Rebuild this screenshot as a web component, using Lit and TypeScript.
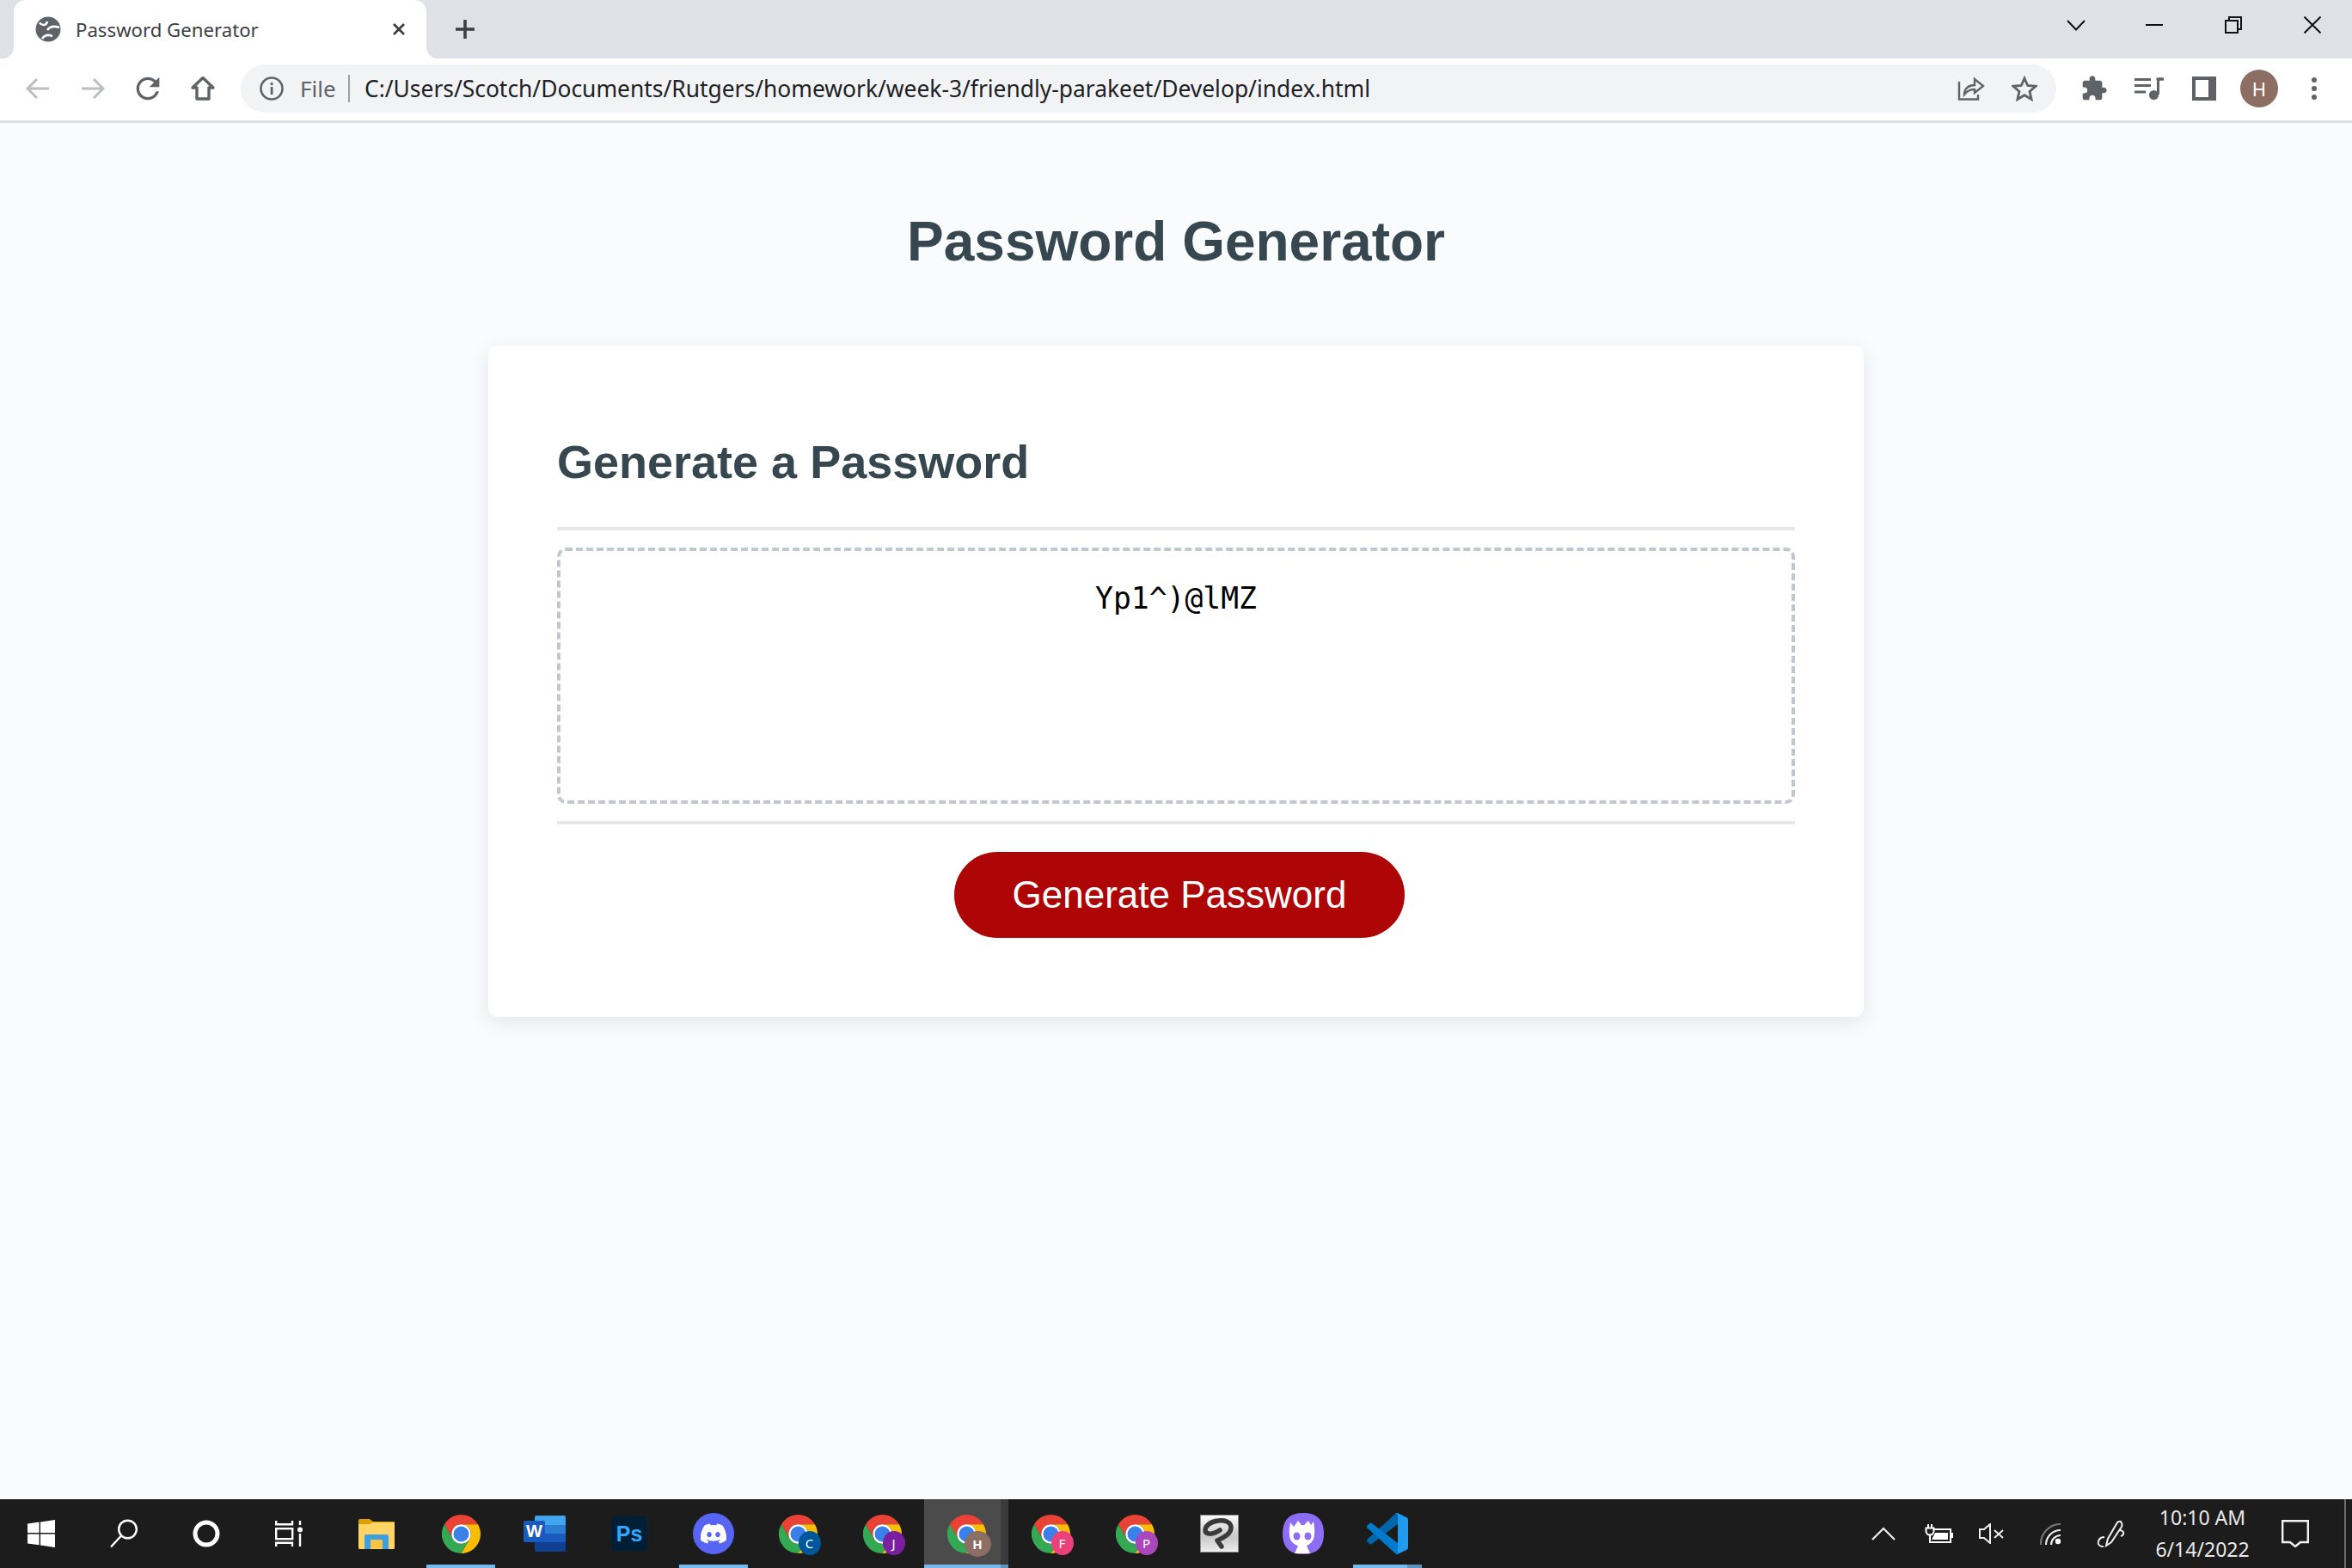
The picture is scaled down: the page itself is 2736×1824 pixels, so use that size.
import { LitElement, html, css } from "lit";
import { customElement } from "lit/decorators.js";

const chrome = (size = 44) => html`<svg class="block" width=${size} height=${size} viewBox="0 0 48 48">
  <path fill="#ea4335" d="M24 0C15.1 0 7.4 4.8 3.2 12l10.4 18A12 12 0 0 1 24 12h20.8C40.6 4.8 32.9 0 24 0z"/>
  <path fill="#fbbc04" d="M44.8 12H24a12 12 0 0 1 10.4 18L24 48c13.3 0 24-10.7 24-24 0-4.4-1.2-8.5-3.2-12z"/>
  <path fill="#34a853" d="M3.2 12A24 24 0 0 0 24 48l10.4-18A12 12 0 0 1 13.6 30z"/>
  <circle cx="24" cy="24" r="12" fill="#fff"/><circle cx="24" cy="24" r="9.6" fill="#3b7fe8"/></svg>`;

const profileChrome = (letter: string, cls: string) => html`<div class="pchrome">${chrome(45)}<span class="badge ${cls}">${letter}</span></div>`;

const taskIcons = {
  win: html`<svg class="block" width="32" height="32" viewBox="0 0 32 32"><path fill="#fff" d="M0 4.6 13.6 2.6V15H0zM15 2.4 32 0V15H15zM0 16.6H13.6V29.3L0 27.4zM15 16.6H32V32L15 29.6z"/></svg>`,
  search: html`<svg class="block" width="34" height="34" viewBox="0 0 34 34" fill="none" stroke="#fff" stroke-width="2.4"><circle cx="21.5" cy="12" r="10.3"/><path d="M14 19.5 2 32.5"/></svg>`,
  cortana: html`<svg class="block" width="32" height="32" viewBox="0 0 32 32"><circle cx="16" cy="16" r="13" fill="none" stroke="#fff" stroke-width="5"/></svg>`,
  view: html`<svg class="block" width="33" height="30" viewBox="0 0 33 30" fill="none" stroke="#fff" stroke-width="2.4"><path d="M1.2 0V4.2H20V0M1.2 30V25.8H20V30"/><rect x="1.2" y="9.2" width="19" height="12"/><path d="M29 0V5M29 15V30"/><circle cx="29" cy="10.5" r="3" fill="#fff" stroke="none"/></svg>`,
  folder: html`<svg class="block" width="42" height="35" viewBox="0 0 42 35"><path fill="#dd9f00" d="M1.5 0H13l4 3H42V10H0V1.500A1.500 1.500 0 0 1 1.500 0z"/><path fill="#ffd665" d="M0 6H13l3-2H40.500A1.500 1.500 0 0 1 42 5.500V33.500A1.500 1.500 0 0 1 40.500 35H1.500A1.500 1.500 0 0 1 0 33.500z"/><path fill="#3d9fdf" d="M9 18H33A2 2 0 0 1 35 20V35H28V24H14V35H7V20A2 2 0 0 1 9 18z"/><rect x="14" y="24" width="14" height="10" fill="#f5c242"/></svg>`,
  word: html`<svg class="block" width="47" height="42" viewBox="0 0 47 42"><path fill="#41a5ee" d="M13 0H45A2 2 0 0 1 47 2V11H11V2A2 2 0 0 1 13 0z"/><rect x="11" y="11" width="36" height="10" fill="#2b7cd3"/><rect x="11" y="21" width="36" height="10" fill="#185abd"/><path fill="#103f91" d="M11 31H47V40A2 2 0 0 1 45 42H13A2 2 0 0 1 11 40z"/></svg><span class="wbox">W</span>`,
  discord: html`<div class="discord"><svg class="block" width="30" height="30" viewBox="0 0 24 24"><path fill="#fff" d="M20.317 4.37a19.791 19.791 0 0 0-4.885-1.515.074.074 0 0 0-.079.037c-.21.375-.444.864-.608 1.25a18.27 18.27 0 0 0-5.487 0 12.64 12.64 0 0 0-.617-1.25.077.077 0 0 0-.079-.037A19.736 19.736 0 0 0 3.677 4.37a.07.07 0 0 0-.032.027C.533 9.046-.32 13.58.099 18.057a.082.082 0 0 0 .031.057 19.9 19.9 0 0 0 5.993 3.03.078.078 0 0 0 .084-.028 14.09 14.09 0 0 0 1.226-1.994.076.076 0 0 0-.041-.106 13.107 13.107 0 0 1-1.872-.892.077.077 0 0 1-.008-.128 10.2 10.2 0 0 0 .372-.292.074.074 0 0 1 .077-.01c3.928 1.793 8.18 1.793 12.062 0a.074.074 0 0 1 .078.01c.12.098.246.198.373.292a.077.077 0 0 1-.006.127 12.299 12.299 0 0 1-1.873.892.077.077 0 0 0-.041.107c.36.698.772 1.362 1.225 1.993a.076.076 0 0 0 .084.028 19.839 19.839 0 0 0 6.002-3.03.077.077 0 0 0 .032-.054c.5-5.177-.838-9.674-3.549-13.66a.061.061 0 0 0-.031-.03zM8.02 15.33c-1.183 0-2.157-1.085-2.157-2.419 0-1.333.956-2.419 2.157-2.419 1.21 0 2.176 1.096 2.157 2.42 0 1.333-.956 2.418-2.157 2.418zm7.975 0c-1.183 0-2.157-1.085-2.157-2.419 0-1.333.955-2.419 2.157-2.419 1.21 0 2.176 1.096 2.157 2.42 0 1.333-.946 2.418-2.157 2.418z"/></svg></div>`,
  clip: html`<div class="clip"><svg class="block" width="42" height="42" viewBox="0 0 42 42" fill="none" stroke="#3a3a3a" stroke-width="5.5" stroke-linecap="round" stroke-linejoin="round"><path d="M24 36 19 29C25 26 35 22 35 14 35 7 27 5 20 6 11 7 5 12 5 17 5 22 13 23 22 17"/></svg></div>`,
  cat: html`<svg class="block" width="48" height="48" viewBox="0 0 48 48"><path fill="#8d6cf6" d="M24 0C40 0 48 8 48 24S40 48 24 48 0 40 0 24 8 0 24 0z"/><path fill="#fff" d="M9 11 13 16 18 9 22 14 25 14 30 9 33 14 36 10C37 16 38 24 36 30 34 35 30 37 28 38L32 47H14L18 38C14 37 10 34 8.500 29 7 23 8 16 9 11z"/><ellipse cx="16.500" cy="27" rx="4" ry="4.500" fill="#8d6cf6"/><ellipse cx="29.500" cy="27" rx="4" ry="4.500" fill="#8d6cf6"/></svg>`,
  code: html`<svg class="block" width="48" height="48" viewBox="0 0 100 100"><path fill="#0065a9" d="M96.46 10.8 75.86.87a6.23 6.23 0 0 0-7.1 1.2L1.3 63.6a4.16 4.16 0 0 0 0 6.16l5.5 5a4.16 4.16 0 0 0 5.32.24L93.34 12.9a4.13 4.13 0 0 1 6.66 3.3v-.24a6.25 6.25 0 0 0-3.54-5.16z"/><path fill="#007acc" d="M96.46 89.2 75.86 99.13a6.23 6.23 0 0 1-7.1-1.2L1.3 36.4a4.16 4.16 0 0 1 0-6.16l5.5-5a4.16 4.16 0 0 1 5.32-.24l81.22 62.1a4.13 4.13 0 0 0 6.66-3.3v.24a6.25 6.25 0 0 1-3.54 5.16z"/><path fill="#1f9cf0" d="M75.86 99.13a6.23 6.23 0 0 1-7.1-1.2c2.3 2.3 6.24.67 6.24-2.6V4.67c0-3.27-3.94-4.9-6.24-2.6a6.23 6.23 0 0 1 7.1-1.2l20.6 9.9A6.25 6.25 0 0 1 100 16.4v67.2a6.25 6.25 0 0 1-3.54 5.63z"/></svg>`,
};

const leftItems = [
  { i: taskIcons.win, c: "n" },
  { i: taskIcons.search, c: "n" },
  { i: taskIcons.cortana, c: "n" },
  { i: taskIcons.view, c: "n last" },
];
const apps = [
  { i: taskIcons.folder, c: "" },
  { i: chrome(45), c: "run" },
  { i: taskIcons.word, c: "wordc" },
  { i: html`<div class="ps">Ps</div>`, c: "" },
  { i: taskIcons.discord, c: "run" },
  { i: profileChrome("C", "b-c"), c: "" },
  { i: profileChrome("J", "b-j"), c: "" },
  { i: profileChrome("H", "b-h"), c: "active" },
  { i: profileChrome("F", "b-f"), c: "" },
  { i: profileChrome("P", "b-p"), c: "" },
  { i: taskIcons.clip, c: "" },
  { i: taskIcons.cat, c: "" },
  { i: taskIcons.code, c: "run split" },
];

@customElement("app-root")
export class AppRoot extends LitElement {
  static styles = css`
    :host { display: flex; flex-direction: column; width: 2736px; height: 1824px; overflow: hidden; background: #fafbfd; }
    * { box-sizing: border-box; }
    .block { display: block; }
    .tabstrip { height: 68px; background: #dee1e6; display: flex; align-items: stretch; flex: none; }
    .tab { position: relative; width: 480px; margin-left: 16px; background: #fff; border-radius: 14px 14px 0 0; display: flex; align-items: center; padding-left: 25px; }
    .tab::before, .tab::after { content: ""; position: absolute; bottom: 0; width: 14px; height: 14px; background: #fff; }
    .tab::before { left: -14px; -webkit-mask: radial-gradient(circle at 0 0, transparent 14px, #000 14.5px); mask: radial-gradient(circle at 0 0, transparent 14px, #000 14.5px); }
    .tab::after { right: -14px; -webkit-mask: radial-gradient(circle at 100% 0, transparent 14px, #000 14.5px); mask: radial-gradient(circle at 100% 0, transparent 14px, #000 14.5px); }
    .tab-title { font: 400 22.2px "Noto Sans", sans-serif; color: #3c4043; margin-left: 17px; flex: 1; white-space: nowrap; }
    .tab-x { margin-right: 24px; }
    .plus { margin-left: 33px; align-self: center; }
    .win { margin-left: auto; display: flex; }
    .win-btn { width: 92px; display: flex; align-items: center; justify-content: center; height: 58px; }
    .win-btn.chev { padding-left: 2px; }
    .toolbar { height: 75px; flex: none; background: #fff; border-bottom: 3px solid #dcdee1; display: flex; align-items: center; padding: 0 12px 3px; }
    .tbtn { width: 64px; height: 64px; display: flex; align-items: center; justify-content: center; flex: none; }
    .omni { width: 2112px; height: 56px; margin: 0 12px; border-radius: 28px; background: #f1f3f4; display: flex; align-items: center; flex: none; padding-left: 22px; }
    .file { font: 400 26px "Noto Sans", sans-serif; color: #5f6368; margin-left: 19px; width: 56px; padding-top: 1px; }
    .sep { width: 2px; height: 32px; background: #9aa0a6; }
    .url { font: 400 26.4px "Noto Sans", sans-serif; color: #202124; margin-left: 17px; flex: 1; white-space: nowrap; padding-top: 1px; }
    .omni-end { display: flex; margin-right: 6px; padding-top: 1px; }
    .omni-btn { width: 62px; display: flex; justify-content: center; align-items: center; }
    .avatar { width: 44px; height: 44px; border-radius: 50%; background: #8d6e63; color: #fff; font: 400 22px "Noto Sans", sans-serif; display: flex; align-items: center; justify-content: center; }

    main { flex: 1; display: flex; flex-direction: column; align-items: center; font-family: "Liberation Sans", Arial, sans-serif; }
    h1 { margin: 101px 0 84px; font-size: 64px; line-height: 74px; font-weight: 700; color: #37474f; }
    .card { width: 1600px; height: 781px; background: #fff; border-radius: 10px; box-shadow: 0 6px 24px rgba(0, 0, 0, 0.09); padding: 80px; display: flex; flex-direction: column; }
    h2 { margin: 24px 0 45px; font-size: 54px; line-height: 62px; font-weight: 700; color: #37474f; }
    .body { border-top: 4px solid #e7e8ea; border-bottom: 4px solid #e7e8ea; padding: 20px 0; }
    textarea { display: block; width: 100%; height: 298px; border: 4px dashed #c0c7d0; border-radius: 10px; resize: none; outline: none; padding: 35px 20px 20px; text-align: center; font: 400 34.7px/40px "DejaVu Sans Mono", monospace; color: #000; background: #fff; }
    .actions { display: flex; justify-content: center; margin: 32px 0 0 8px; }
    button { width: 524px; height: 100px; border: 0; border-radius: 50px; background: #ae0606; color: #fff; font: 400 44px "Liberation Sans", Arial, sans-serif; }

    .taskbar { height: 80px; flex: none; background: #1c1c1c; display: flex; align-items: stretch; }
    .slot { position: relative; display: flex; align-items: center; justify-content: center; width: 98px; }
    .slot.n { width: 96px; }
    .slot.last { margin-right: 5px; }
    .slot.run::after, .slot.active::after { content: ""; position: absolute; bottom: 0; left: 9px; right: 9px; height: 4px; background: #76b9ed; }
    .slot.active { background: linear-gradient(90deg, #4b4b4b 0 89px, #3a3a3a 89px); }
    .slot.active::after { left: 0; right: 0; background: linear-gradient(90deg, #76b9ed 0 89px, #5e93bd 89px); }
    .slot.split::after { background: linear-gradient(90deg, #76b9ed 0 63px, #5e93bd 63px); }
    .wbox { position: absolute; left: 24px; top: 25px; width: 25px; height: 25px; background: #185abd; border-radius: 2px; color: #fff; font: 700 20px/25px "Liberation Sans", sans-serif; text-align: center; }
    .ps { width: 42px; height: 40px; background: #001e36; border-radius: 5px; color: #31a8ff; font: 700 25px/40px "Liberation Sans", sans-serif; text-align: center; }
    .discord { width: 48px; height: 48px; border-radius: 50%; background: #5865f2; display: flex; align-items: center; justify-content: center; }
    .clip { width: 45px; height: 44px; border: 1px solid #8a8a8a; background: linear-gradient(180deg, #fafafa, #c9c9c9 60%, #eee); }
    .pchrome { position: relative; width: 45px; height: 45px; }
    .badge { position: absolute; left: 23px; top: 19px; width: 26px; height: 28px; border-radius: 50%; color: #fff; font: 400 15px/28px "Noto Sans", sans-serif; text-align: center; }
    .b-c { background: #01579b; }
    .b-j { background: #7b1fa2; }
    .b-h { background: #8d6e63; width: 31px; height: 30px; line-height: 30px; font-weight: 700; left: 20px; }
    .b-f { background: #ec407a; }
    .b-p { background: #ab47bc; }
    .tray { margin-left: auto; display: grid; grid-template-columns: 64px 64px 60px 76px 64px 150px 66px 24px 2px 7px; align-items: center; }
    .tray > div { display: flex; justify-content: center; align-items: center; }
    .clock { flex-direction: column; font: 400 23px/37px "Noto Sans", sans-serif; color: #e8e8e8; text-align: center; }
    .endline { background: #6b6b6b; height: 80px; }
  `;

  render() {
    const grey = "#5f6368";
    return html`
      <div class="tabstrip">
        <div class="tab">
          <svg class="block" width="30" height="30" viewBox="0 0 30 30"><circle cx="15" cy="15" r="14.500" fill=${grey}/><path d="M5 7.500C8 11 13 11 14 6M14 16C17 11.500 22 11 28 13M8 26C11 21.500 15 21 20 23" fill="none" stroke="#fff" stroke-width="2.600"/></svg>
          <span class="tab-title">Password Generator</span>
          <svg class="tab-x block" width="16" height="16" viewBox="0 0 16 16"><path d="M2 2 14 14M14 2 2 14" stroke="#3c4043" stroke-width="2.800"/></svg>
        </div>
        <svg class="plus block" width="24" height="24" viewBox="0 0 24 24"><path d="M12 1V23M1 12H23" stroke="#3c4043" stroke-width="3.600"/></svg>
        <div class="win">
          <div class="win-btn chev"><svg class="block" width="22" height="13" viewBox="0 0 22 13"><path d="M1 1 11 11.500 21 1" fill="none" stroke="#111" stroke-width="2"/></svg></div>
          <div class="win-btn"><svg class="block" width="20" height="2" viewBox="0 0 20 2"><rect width="20" height="2" fill="#111"/></svg></div>
          <div class="win-btn"><svg class="block" width="20" height="20" viewBox="0 0 20 20" fill="none" stroke="#111" stroke-width="2"><rect x="1" y="5" width="14" height="14"/><path d="M5 5V1H19V15H15"/></svg></div>
          <div class="win-btn"><svg class="block" width="20" height="20" viewBox="0 0 20 20"><path d="M0.500 0.500 19.500 19.500M19.500 0.500 0.500 19.500" stroke="#111" stroke-width="2"/></svg></div>
        </div>
      </div>
      <div class="toolbar">
        <div class="tbtn"><svg class="block" width="28" height="26" viewBox="0 0 28 26" fill="none" stroke="#bbbdbf" stroke-width="3"><path d="M27 13H3M13 2 2 13 13 24"/></svg></div>
        <div class="tbtn"><svg class="block" width="28" height="26" viewBox="0 0 28 26" fill="none" stroke="#bbbdbf" stroke-width="3"><path d="M1 13H25M15 2 26 13 15 24"/></svg></div>
        <div class="tbtn"><svg class="block" width="40" height="40" viewBox="0 0 24 24"><path fill=${grey} d="M17.650 6.350A7.958 7.958 0 0 0 12 4c-4.420 0-7.990 3.580-7.990 8s3.570 8 7.990 8c3.730 0 6.840-2.550 7.730-6h-2.080A5.990 5.990 0 0 1 12 18c-3.310 0-6-2.690-6-6s2.690-6 6-6c1.660 0 3.140.690 4.220 1.780L13 11h7V4l-2.350 2.350z"/></svg></div>
        <div class="tbtn"><svg class="block" width="32" height="32" viewBox="0 0 32 32" fill="none" stroke=${grey} stroke-width="3.400"><path d="M16 3.500 4 15H9V28H23V15H28Z" stroke-linejoin="round"/></svg></div>
        <div class="omni">
          <svg class="block" width="28" height="28" viewBox="0 0 28 28"><circle cx="14" cy="14" r="12.500" fill="none" stroke=${grey} stroke-width="2.600"/><rect x="12.700" y="12" width="2.800" height="9" fill=${grey}/><rect x="12.700" y="7" width="2.800" height="3" fill=${grey}/></svg>
          <span class="file">File</span>
          <span class="sep"></span>
          <span class="url">C:/Users/Scotch/Documents/Rutgers/homework/week-3/friendly-parakeet/Develop/index.html</span>
          <div class="omni-end">
            <div class="omni-btn"><svg class="block" width="32" height="28" viewBox="0 0 32 28" fill="none" stroke=${grey} stroke-width="2.400"><path d="M2 6V26.500H24V21"/><path d="M8 21C8 14 13 10 20 10V3L30 11 20 19V15C15 15 11 17 8 21Z"/></svg></div>
            <div class="omni-btn"><svg class="block" width="30" height="30" viewBox="0 0 30 30"><path d="M15 3 18.700 11.500 28 12.300 21 18.400 23.100 27.500 15 22.700 6.900 27.500 9 18.400 2 12.300 11.300 11.500Z" fill="none" stroke=${grey} stroke-width="2.800"/></svg></div>
          </div>
        </div>
        <div class="tbtn"><svg class="block" width="32" height="32" viewBox="0 0 24 24"><path fill=${grey} d="M20.500 11H19V7c0-1.100-.9-2-2-2h-4V3.500C13 2.120 11.880 1 10.500 1S8 2.120 8 3.500V5H4c-1.100 0-1.990.9-1.990 2v3.800H3.500c1.490 0 2.700 1.210 2.700 2.700s-1.210 2.700-2.700 2.700H2V20c0 1.100.9 2 2 2h3.800v-1.500c0-1.490 1.210-2.700 2.700-2.700 1.490 0 2.700 1.210 2.700 2.700V22H17c1.100 0 2-.9 2-2v-4h1.500c1.380 0 2.500-1.120 2.500-2.500S21.880 11 20.500 11z"/></svg></div>
        <div class="tbtn"><svg class="block" width="34" height="28" viewBox="0 0 34 28"><path d="M0 3.500H19M0 10.500H19M0 18H13" stroke=${grey} stroke-width="2.800"/><path d="M27.500 2.500V21" stroke=${grey} stroke-width="3"/><path d="M27 3H33" stroke=${grey} stroke-width="3.500" stroke-linecap="round"/><circle cx="22.500" cy="21.500" r="5.500" fill=${grey}/></svg></div>
        <div class="tbtn"><svg class="block" width="28" height="28" viewBox="0 0 28 28"><path fill=${grey} fill-rule="evenodd" d="M0 0H28V28H0ZM4 4V24H19V4Z"/></svg></div>
        <div class="tbtn"><div class="avatar">H</div></div>
        <div class="tbtn"><svg class="block" width="8" height="28" viewBox="0 0 8 28"><circle cx="4" cy="4" r="3" fill=${grey}/><circle cx="4" cy="14" r="3" fill=${grey}/><circle cx="4" cy="24" r="3" fill=${grey}/></svg></div>
      </div>
      <main>
        <h1>Password Generator</h1>
        <section class="card">
          <h2>Generate a Password</h2>
          <div class="body"><textarea readonly .value=${"Yp1^)@lMZ"}></textarea></div>
          <div class="actions"><button>Generate Password</button></div>
        </section>
      </main>
      <footer class="taskbar">
        ${leftItems.map((it) => html`<div class="slot ${it.c}">${it.i}</div>`)}
        ${apps.map((it) => html`<div class="slot ${it.c}">${it.i}</div>`)}
        <div class="tray">
          <div><svg class="block" width="28" height="16" viewBox="0 0 28 16"><path d="M1 15 14 2 27 15" fill="none" stroke="#eee" stroke-width="2.200"/></svg></div>
          <div><svg class="block" width="33" height="22" viewBox="0 0 33 22" fill="none" stroke="#fff" stroke-width="2"><path d="M4 0V4M8 0V4M1.500 4.500H10.500V8A4.500 4.500 0 0 1 1.500 8Z"/><path d="M6 13V21H30V6H11"/><path d="M12 10H27V18H8Z" fill="#fff" stroke="none"/><rect x="31" y="10" width="2" height="6" fill="#fff" stroke="none"/></svg></div>
          <div><svg class="block" width="30" height="24" viewBox="0 0 30 24" fill="none" stroke="#eee" stroke-width="2"><path d="M1 7H6L13 1V23L6 17H1Z"/><path d="M18 8 28 17M28 8 18 17"/></svg></div>
          <div><svg class="block" width="25" height="25" viewBox="0 0 25 25" fill="none" stroke-width="2.200"><path d="M1 25V24A23 23 0 0 1 24 1" stroke="#777"/><path d="M7 25A17 17 0 0 1 24 8" stroke="#eee"/><path d="M13 25A11 11 0 0 1 24 14" stroke="#eee"/><circle cx="21" cy="21" r="3.200" fill="#fff"/></svg></div>
          <div><svg class="block" width="33" height="32" viewBox="0 0 33 32" fill="none" stroke="#eee" stroke-width="2"><path d="M11 30 13 22 24 3Q26 1 28 2L29 4Q30 6 29 8L17 26Z"/><path d="M9 20C3 20 1 25 2 28 3 31 6 31 8 31"/><path d="M26 12C32 12 33 17 28 19"/></svg></div>
          <div class="clock"><span>10:10 AM</span><span>6/14/2022</span></div>
          <div><svg class="block" width="32" height="32" viewBox="0 0 32 32" fill="none" stroke="#f2f2f2" stroke-width="2.400"><path d="M1.200 1.200H30.800V26H22L16 31 10 26H1.200Z"/></svg></div>
          <div></div>
          <div class="endline"></div>
          <div></div>
        </div>
      </footer>
    `;
  }
}
